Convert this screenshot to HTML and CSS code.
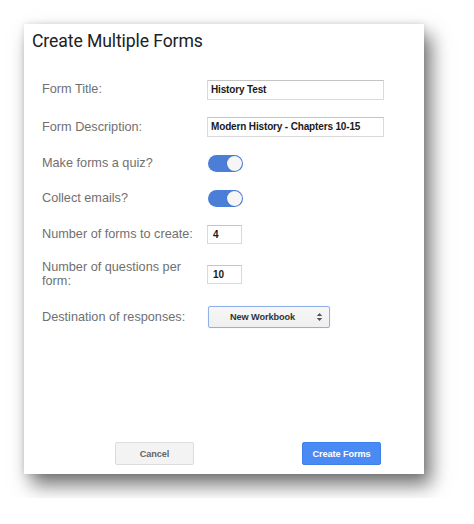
FILE: index.html
```html
<!DOCTYPE html>
<html>
<head>
<meta charset="utf-8">
<link rel="stylesheet" href="styles.css">
</head>
<body>
<div class="dialog">
  <h1 class="title">Create Multiple Forms</h1>
  <div class="form">
    <label class="label">Form Title:</label>
    <div class="control"><div class="text-input wide">History Test</div></div>

    <label class="label">Form Description:</label>
    <div class="control"><div class="text-input wide">Modern History - Chapters 10-15</div></div>

    <label class="label">Make forms a quiz?</label>
    <div class="control"><span class="toggle on"><span class="knob"></span></span></div>

    <label class="label">Collect emails?</label>
    <div class="control"><span class="toggle on"><span class="knob"></span></span></div>

    <label class="label">Number of forms to create:</label>
    <div class="control"><div class="text-input small">4</div></div>

    <label class="label two-line">Number of questions per form:</label>
    <div class="control"><div class="text-input small">10</div></div>

    <label class="label">Destination of responses:</label>
    <div class="control">
      <div class="select">
        <span class="select-text">New Workbook</span>
        <svg class="select-arrows" width="7" height="10" viewBox="0 0 7 10"><path d="M0.8 4 L3.5 1 L6.2 4 Z M0.8 6 L3.5 9 L6.2 6 Z" fill="#555"/></svg>
      </div>
    </div>
  </div>
  <div class="spacer"></div>
  <div class="actions">
    <button class="btn cancel">Cancel</button>
    <button class="btn primary">Create Forms</button>
  </div>
</div>
</body>
</html>
```
FILE: styles.css
```css
html, body {
  margin: 0;
  padding: 0;
  background: #fff;
}
body {
  padding: 24px;
  font-family: "Liberation Sans", Arial, sans-serif;
}
.dialog {
  width: 400px;
  height: 450px;
  box-sizing: border-box;
  background: #fff;
  display: flex;
  flex-direction: column;
  box-shadow: 7px 11px 18px rgba(0,0,0,0.55), 0 0 6px rgba(0,0,0,0.12);
}
.title {
  margin: 0;
  padding: 6px 0 0 8px;
  font-family: Roboto, "Open Sans", sans-serif;
  font-weight: 400;
  font-size: 17.6px;
  line-height: 22px;
  color: #202124;
  letter-spacing: -0.1px;
}
.form {
  display: grid;
  grid-template-columns: 165px auto;
  row-gap: 17.8px;
  align-items: center;
  margin: 27.5px 0 0 18px;
}
.label {
  font-size: 12.7px;
  color: #707070;
  line-height: 15px;
}
.label.two-line {
  width: 150px;
  line-height: 13.5px;
}
.control {
  display: flex;
  align-items: center;
}
.text-input {
  box-sizing: border-box;
  height: 20px;
  border: 1px solid #d9d9d9;
  border-top-color: #c4c4c4;
  padding: 0 3px;
  font-size: 10px;
  font-weight: 700;
  letter-spacing: -0.15px;
  line-height: 18px;
  color: #1a1a1a;
  background: #fff;
}
.text-input.wide { width: 177px; }
.text-input.small { width: 35px; padding-left: 5px; height: 19px; line-height: 17px; }
.toggle {
  position: relative;
  display: inline-block;
  width: 35px;
  height: 17px;
  border-radius: 9px;
  background: #4b7ed6;
  margin-left: 1px;
}
.knob {
  position: absolute;
  right: 1px;
  top: 1px;
  width: 15px;
  height: 15px;
  border-radius: 50%;
  background: #f6f6f6;
  box-shadow: 0 0 1px rgba(0,0,0,0.3);
}
.select {
  box-sizing: border-box;
  width: 122px;
  height: 22px;
  margin-left: 1px;
  border: 1px solid #8fb0e8;
  border-radius: 2px;
  background: linear-gradient(#f7f7f7, #efefef);
  display: flex;
  align-items: center;
  padding: 0 6px 0 0;
  box-shadow: 0 0 1px rgba(77,144,254,0.4);
}
.select-text {
  flex: 1;
  text-align: center;
  font-size: 9.2px;
  font-weight: 700;
  letter-spacing: -0.1px;
  color: #333;
}
.select-arrows { display: block; }
.spacer { flex: 1; }
.actions {
  display: flex;
  padding: 0 0 9px 91px;
  gap: 108px;
}
.btn {
  box-sizing: border-box;
  height: 23px;
  width: 79px;
  border-radius: 2px;
  font-family: "Liberation Sans", Arial, sans-serif;
  font-size: 9.2px;
  font-weight: 700;
  letter-spacing: -0.1px;
  padding: 0;
}
.btn.cancel {
  background: #f3f3f3;
  border: 1px solid #dcdcdc;
  color: #666;
}
.btn.primary {
  background: #4a8af4;
  border: 1px solid #3f7fe8;
  color: #fff;
}
```
